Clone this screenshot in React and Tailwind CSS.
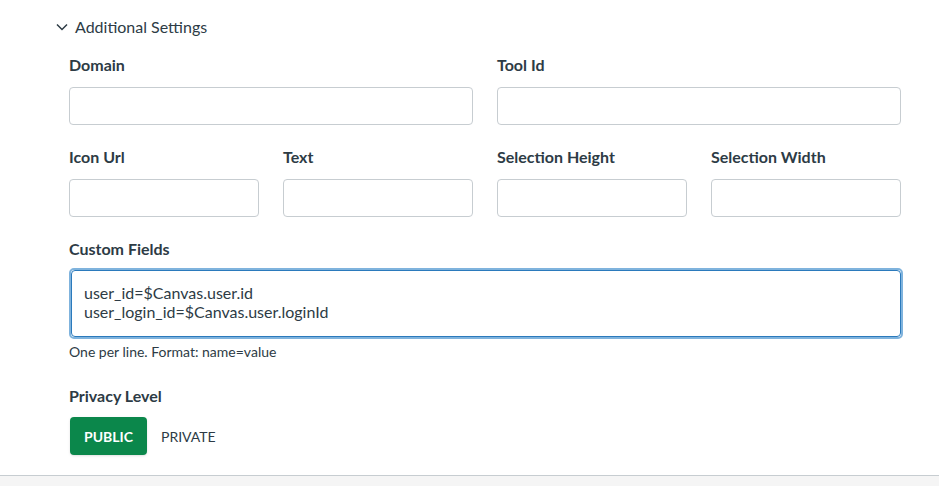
import React from "react";

const inputCls =
  "block w-full h-[38px] rounded border border-[#c7cdd1] bg-white px-3 text-base text-[#2d3b45] outline-none";

function Field({ label, className = "" }) {
  return (
    <div className={className}>
      <label className="block h-5 leading-5 text-[16px] font-bold text-[#2d3b45] mb-3">
        {label}
      </label>
      <input type="text" className={inputCls} />
    </div>
  );
}

export default function App() {
  return (
    <div className="w-[939px] h-[486px] bg-white flex flex-col font-['Lato','Liberation_Sans',sans-serif] text-[#2d3b45]">
      <div className="flex-1 pl-[69px] pr-[38px]">
        {/* Section toggle */}
        <div className="flex items-center h-5 mt-[17px] -ml-[13px]">
          <svg className="w-[12px] h-[12px] mr-[7px]" viewBox="0 0 12 12" fill="none" stroke="#2d3b45" strokeWidth="1.5">
            <path d="M1 3.5 6 8.5l5-5" />
          </svg>
          <span className="text-[16px]">Additional Settings</span>
        </div>

        <div className="grid grid-cols-2 gap-x-6 mt-[18px]">
          <Field label="Domain" />
          <Field label="Tool Id" />
        </div>

        <div className="grid grid-cols-4 gap-x-6 mt-[22px]">
          <Field label="Icon Url" />
          <Field label="Text" />
          <Field label="Selection Height" />
          <Field label="Selection Width" />
        </div>

        <div className="mt-[22px]">
          <label className="block h-5 leading-5 text-[16px] font-bold mb-[9px]">
            Custom Fields
          </label>
          <div className="-mr-[2px] rounded-[5px] border-2 border-[#7fb3dd]">
            <textarea
              className="block w-full h-[67px] resize-none rounded border border-[#2b7abc] px-3 pt-[12px] pb-2 text-[16px] leading-[19px] text-[#2d3b45] outline-none"
              spellCheck={false}
              defaultValue={"user_id=$Canvas.user.id\nuser_login_id=$Canvas.user.loginId"}
            />
          </div>
          <p className="text-[14px] leading-4 mt-[5px]">One per line. Format: name=value</p>
        </div>

        <div className="mt-[26px]">
          <label className="block h-5 leading-5 text-[16px] font-bold">Privacy Level</label>
          <div className="flex items-center mt-[11px] ml-px">
            <button className="h-[38px] px-[14px] rounded bg-[#0b874b] text-white text-[14px] font-bold shadow-sm">
              PUBLIC
            </button>
            <button className="h-[38px] px-[14px] text-[14px] text-[#2d3b45]">PRIVATE</button>
          </div>
        </div>
      </div>
      <div className="h-[11px] border-t border-[#c7cdd1] bg-[#f5f5f5]" />
    </div>
  );
}
